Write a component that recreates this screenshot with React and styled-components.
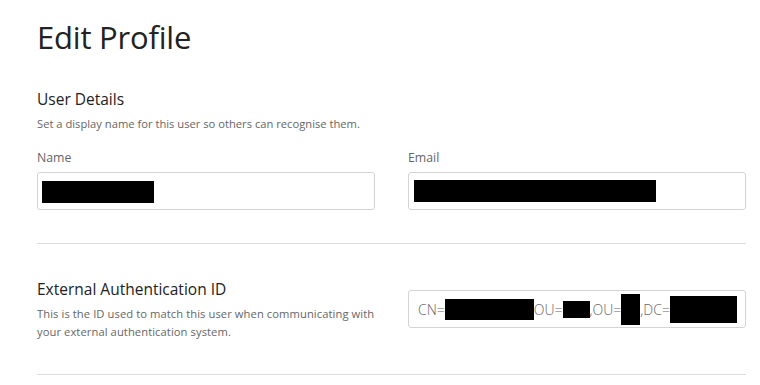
import React from "react";
import styled, { createGlobalStyle } from "styled-components";

const Global = createGlobalStyle`
  html, body { margin: 0; padding: 0; background: #fff; }
  body { font-family: "Open Sans", "Noto Sans", sans-serif; color: #222; }
  * { box-sizing: border-box; }
`;

const Page = styled.div`
  width: 760px;
  padding: 14px 14px 0 37px;
`;

const Container = styled.div`
  width: 709px;
`;

const PageTitle = styled.h1`
  margin: 0;
  font-size: 31px;
  font-weight: 400;
  line-height: 47px;
  color: #222;
  letter-spacing: -0.2px;
`;

const Section = styled.section`
  padding-top: ${(p) => p.$top}px;
  padding-bottom: ${(p) => p.$bottom}px;
  border-bottom: 1px solid #ddd;
`;

const SectionTitle = styled.h2`
  margin: 0;
  font-size: 15.5px;
  font-weight: 400;
  line-height: 22px;
  color: #222;
`;

const Desc = styled.p`
  margin: ${(p) => p.$top || 6}px 0 0;
  font-size: 11.2px;
  letter-spacing: ${(p) => p.$ls || 0}px;
  line-height: 18px;
  color: #666;
`;

const Grid = styled.div`
  display: grid;
  grid-template-columns: 1fr 1fr;
  column-gap: 33px;
  margin-top: ${(p) => p.$top || 0}px;
  align-items: start;
`;

const Field = styled.div`
  display: flex;
  flex-direction: column;
`;

const Label = styled.label`
  font-size: 12.3px;
  line-height: 18px;
  color: #666;
  margin-bottom: 5px;
`;

const Input = styled.div`
  height: 38px;
  margin-top: ${(p) => p.$top || 0}px;
  border: 1px solid #d4d4d4;
  border-radius: 3px;
  background: #fff;
  display: flex;
  align-items: center;
  padding: 0 ${(p) => p.$pad || 4}px;
  font-size: 14px;
  font-weight: 300;
  color: #666;
  white-space: nowrap;
  overflow: hidden;
`;

const Redact = styled.span`
  display: inline-block;
  background: #000;
  width: ${(p) => p.$w}px;
  height: ${(p) => p.$h}px;
  margin-top: ${(p) => p.$dy || 0}px;
  flex: none;
`;

export default function App() {
  return (
    <>
      <Global />
      <Page>
        <Container>
          <PageTitle>Edit Profile</PageTitle>
          <Section $top={27} $bottom={33}>
            <SectionTitle>User Details</SectionTitle>
            <Desc $top={5}>Set a display name for this user so others can recognise them.</Desc>
            <Grid $top={16}>
              <Field>
                <Label>Name</Label>
                <Input>
                  <Redact $w={112} $h={22} $dy={2} />
                </Input>
              </Field>
              <Field>
                <Label>Email</Label>
                <Input $pad={5}>
                  <Redact $w={242} $h={22} />
                </Input>
              </Field>
            </Grid>
          </Section>
          <Section $top={34} $bottom={33}>
            <Grid>
              <div>
                <SectionTitle>External Authentication ID</SectionTitle>
                <Desc $top={5} $ls={0.08}>
                  This is the ID used to match this user when communicating with your external authentication system.
                </Desc>
              </div>
              <Input $pad={9} $top={12}>
                CN=
                <Redact $w={89} $h={21} />
                OU=
                <Redact $w={27} $h={17} />
                ,OU=
                <Redact $w={19} $h={31} />
                ,DC=
                <Redact $w={67} $h={27} />
              </Input>
            </Grid>
          </Section>
        </Container>
      </Page>
    </>
  );
}
